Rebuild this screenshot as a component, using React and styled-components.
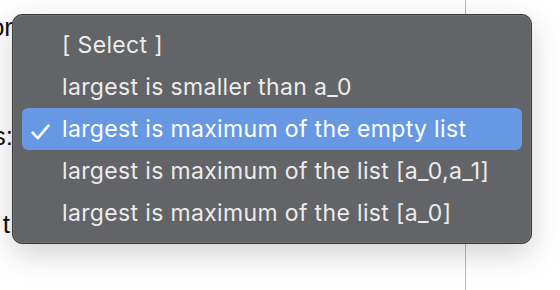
import React from "react";
import styled, { createGlobalStyle } from "styled-components";

const GlobalStyle = createGlobalStyle`
  html, body {
    margin: 0;
    padding: 0;
    background: #ffffff;
  }
  body {
    width: 560px;
    height: 290px;
    overflow: hidden;
    font-family: "Inter", "Liberation Sans", sans-serif;
  }
`;

const Page = styled.div`
  position: relative;
  width: 560px;
  height: 290px;
  overflow: hidden;
`;

const Column = styled.div`
  width: 466px;
  height: 290px;
  border-right: 1px solid #b8b8b8;
  box-sizing: border-box;
  display: flex;
  flex-direction: column;
  padding-top: 12px;
`;

const Line = styled.div`
  width: ${(p) => p.$w || 13}px;
  display: flex;
  justify-content: flex-end;
  white-space: nowrap;
  font-family: "Liberation Sans", Arial, sans-serif;
  font-size: 26px;
  line-height: 30px;
  color: #111;
  margin-bottom: ${(p) => p.$gap}px;
`;

const Menu = styled.ul`
  position: absolute;
  left: 12px;
  top: 14px;
  width: 520px;
  box-sizing: border-box;
  margin: 0;
  padding: 9px 9px;
  list-style: none;
  background: #636467;
  border: 1px solid #3a3a3c;
  border-radius: 10px;
  box-shadow: 0 10px 30px rgba(0, 0, 0, 0.18), inset 0 0 0 1px rgba(255, 255, 255, 0.08);
`;

const Item = styled.li`
  height: 42px;
  display: flex;
  align-items: center;
  border-radius: 6px;
  padding-left: 40px;
  position: relative;
  font-size: 23px;
  letter-spacing: 0.35px;
  color: ${(p) => (p.$active ? "#ffffff" : "#ececec")};
  background: ${(p) => (p.$active ? "#6698e3" : "transparent")};
`;

const Check = styled.svg`
  position: absolute;
  left: 9px;
  top: 16px;
`;

const options = [
  "[ Select ]",
  "largest is smaller than a_0",
  "largest is maximum of the empty list",
  "largest is maximum of the list [a_0,a_1]",
  "largest is maximum of the list [a_0]",
];

export default function App() {
  return (
    <>
      <GlobalStyle />
      <Page>
        <Column>
          <Line $gap={79}><span>for</span></Line>
          <Line $gap={58}><span>is:</span></Line>
          <Line $gap={0} $w={10}><span>t</span></Line>
        </Column>
        <Menu>
          {options.map((o, i) => (
            <Item key={o} $active={i === 2}>
              {i === 2 && (
                <Check width="19" height="16" viewBox="0 0 19 16">
                  <path
                    d="M1.6 8.6 L6.8 14.2 L17.4 1.6"
                    fill="none"
                    stroke="#ffffff"
                    strokeWidth="2.6"
                    strokeLinecap="round"
                    strokeLinejoin="round"
                  />
                </Check>
              )}
              {o}
            </Item>
          ))}
        </Menu>
      </Page>
    </>
  );
}
